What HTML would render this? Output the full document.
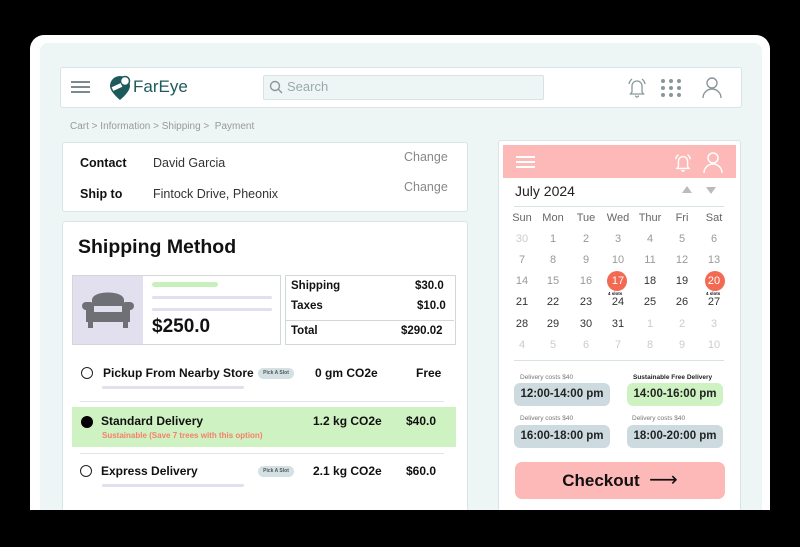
<!DOCTYPE html>
<html><head><meta charset="utf-8"><style>
*{margin:0;padding:0;box-sizing:border-box}
body{width:800px;height:547px;background:#000;position:relative;overflow:hidden;font-family:"Liberation Sans","DejaVu Sans",sans-serif;color:#111}
.a{position:absolute}
.box{position:absolute;background:#fff;border:1.5px solid #d8e4e6;border-radius:3px}
.g{color:#888}
.b{font-weight:bold}
.cal{position:absolute;width:30px;text-align:center;font-size:11px;color:#999}
.dk{color:#333}
.lt{color:#ccc}
.slot{position:absolute;width:96px;height:23px;border-radius:6px;background:#cddbe0;font-size:11.5px;font-weight:bold;text-align:center;line-height:23px;color:#222}
.sl{position:absolute;font-size:6.5px;color:#777}
.pill{position:absolute;background:#d3e0e4;border-radius:6px;font-size:5px;font-weight:bold;color:#555;width:36px;height:11px;line-height:11px;text-align:center}
.bar{position:absolute;height:4px;border-radius:2px;background:#e2e0ee}
.rad{position:absolute;width:12px;height:12px;border:1.5px solid #222;border-radius:50%}
</style></head><body>
<div class="a" style="left:30px;top:35px;width:740px;height:490px;background:#fff;border-radius:14px"></div>
<div class="a" style="left:40px;top:43px;width:722px;height:480px;background:#eef5f5;border-radius:8px"></div>

<!-- header -->
<div class="box" style="left:60px;top:67px;width:682px;height:41px"></div>
<div class="a" style="left:71px;top:81px;width:19px;height:2px;background:#7d8a8c;box-shadow:0 5px 0 #7d8a8c,0 10px 0 #7d8a8c"></div>
<svg class="a" style="left:106px;top:74px" width="28" height="28" viewBox="0 0 28 28"><path d="M14 2a10 10 0 0 0-10 10c0 6 10 14 10 14s10-8 10-14A10 10 0 0 0 14 2z" fill="#1d5a5c"/><circle cx="19" cy="7" r="4.5" fill="#fff" stroke="#1d5a5c" stroke-width="1.5"/><rect x="6" y="11" width="10" height="4" fill="#fff" transform="rotate(-25 11 13)"/></svg>
<div class="a" style="left:133px;top:77px;font-size:17px;color:#1d5a5c">FarEye</div>
<div class="a" style="left:263px;top:75px;width:281px;height:25px;background:#eef5f5;border:1.5px solid #d6e2e4;border-radius:2px"></div>
<svg class="a" style="left:269px;top:80px" width="14" height="14"><circle cx="6" cy="6" r="4.5" fill="none" stroke="#8a9799" stroke-width="1.4"/><path d="M9.3 9.3L13 13" stroke="#8a9799" stroke-width="1.4"/></svg>
<div class="a" style="left:287px;top:79px;font-size:13px;color:#9aa">Search</div>
<svg class="a" style="left:625px;top:75px" width="24" height="24" viewBox="0 0 24 24" fill="none" stroke="#8a9799" stroke-width="1.3"><path d="M7 17V11a5 5 0 0 1 10 0v6l1.5 2h-13z"/><path d="M10.5 20.5a1.5 1.5 0 0 0 3 0"/><path d="M4 9a8 8 0 0 1 3-5M20 9a8 8 0 0 0-3-5"/></svg>
<svg class="a" style="left:659px;top:77px" width="25" height="22" fill="#8a9799"><circle cx="4" cy="4" r="2"/><circle cx="12" cy="4" r="2"/><circle cx="20" cy="4" r="2"/><circle cx="4" cy="11" r="2"/><circle cx="12" cy="11" r="2"/><circle cx="20" cy="11" r="2"/><circle cx="4" cy="18" r="2"/><circle cx="12" cy="18" r="2"/><circle cx="20" cy="18" r="2"/></svg>
<svg class="a" style="left:700px;top:75px" width="24" height="24" fill="none" stroke="#8a9799" stroke-width="1.4"><circle cx="12" cy="8" r="5"/><path d="M3 23a9 9 0 0 1 18 0"/></svg>

<div class="a g" style="left:70px;top:121px;font-size:10px;color:#999">Cart &gt; Information &gt; Shipping &gt;&nbsp; Payment</div>

<!-- contact -->
<div class="box" style="left:62px;top:142px;width:406px;height:70px"></div>
<div class="a b" style="left:80px;top:156px;font-size:12.5px">Contact</div>
<div class="a" style="left:153px;top:156px;font-size:12.5px;color:#333">David Garcia</div>
<div class="a" style="left:404px;top:150px;font-size:12.5px;color:#888">Change</div>
<div class="a b" style="left:80px;top:187px;font-size:12.5px">Ship to</div>
<div class="a" style="left:153px;top:187px;font-size:12.5px;color:#333">Fintock Drive, Pheonix</div>
<div class="a" style="left:404px;top:180px;font-size:12.5px;color:#888">Change</div>

<!-- shipping -->
<div class="box" style="left:62px;top:221px;width:406px;height:300px"></div>
<div class="a b" style="left:78px;top:236px;font-size:19.5px">Shipping Method</div>
<div class="a" style="left:72px;top:275px;width:209px;height:70px;border:1.5px solid #d0d8da;background:#fff"></div>
<div class="a" style="left:73px;top:276px;width:70px;height:68px;background:#e2e0ee"></div>
<svg class="a" style="left:80px;top:286px" width="56" height="46" viewBox="0 0 56 46" fill="#6f6f76"><path d="M12 14c0-10 32-10 32 0v6H12z"/><rect x="2" y="16" width="12" height="8" rx="4"/><rect x="42" y="16" width="12" height="8" rx="4"/><rect x="6" y="18" width="8" height="18"/><rect x="42" y="18" width="8" height="18"/><rect x="10" y="26" width="36" height="10"/><rect x="8" y="36" width="5" height="6"/><rect x="43" y="36" width="5" height="6"/></svg>
<div class="a" style="left:152px;top:282px;width:66px;height:5px;border-radius:3px;background:#c8f0bc"></div>
<div class="bar" style="left:152px;top:296px;width:120px;height:3px"></div>
<div class="bar" style="left:152px;top:308px;width:120px;height:3px"></div>
<div class="a b" style="left:152px;top:316px;font-size:19px">$250.0</div>
<div class="a" style="left:285px;top:275px;width:171px;height:70px;border:1.5px solid #d0d8da;background:#fff"></div>
<div class="a" style="left:286px;top:320px;width:168px;height:1px;background:#d0d8da"></div>
<div class="a b" style="left:291px;top:280px;font-size:11.5px">Shipping</div>
<div class="a b" style="left:415px;top:280px;font-size:11.5px">$30.0</div>
<div class="a b" style="left:291px;top:300px;font-size:11.5px">Taxes</div>
<div class="a b" style="left:417px;top:300px;font-size:11.5px">$10.0</div>
<div class="a b" style="left:291px;top:325px;font-size:11.5px">Total</div>
<div class="a b" style="left:401px;top:325px;font-size:11.5px">$290.02</div>

<div class="rad" style="left:81px;top:367px"></div>
<div class="a b" style="left:103px;top:366px;font-size:12px">Pickup From Nearby Store</div>
<div class="pill" style="left:258px;top:368px">Pick A Slot</div>
<div class="a b" style="left:315px;top:366px;font-size:12px">0 gm CO2e</div>
<div class="a b" style="left:416px;top:366px;font-size:12px">Free</div>
<div class="bar" style="left:102px;top:386px;width:142px;height:3px"></div>
<div class="a" style="left:80px;top:401px;width:364px;height:1px;background:#e0e6e8"></div>
<div class="a" style="left:72px;top:407px;width:384px;height:40px;background:#cff2c2"></div>
<div class="a" style="left:81px;top:416px;width:12px;height:12px;border-radius:50%;background:#000"></div>
<div class="a b" style="left:101px;top:414px;font-size:12px">Standard Delivery</div>
<div class="a b" style="left:102px;top:431px;font-size:8px;color:#f5806a">Sustainable (Save 7 trees with this option)</div>
<div class="a b" style="left:313px;top:414px;font-size:12px">1.2 kg CO2e</div>
<div class="a b" style="left:406px;top:414px;font-size:12px">$40.0</div>
<div class="a" style="left:80px;top:453px;width:364px;height:1px;background:#e0e6e8"></div>
<div class="rad" style="left:80px;top:465px"></div>
<div class="a b" style="left:101px;top:464px;font-size:12px">Express Delivery</div>
<div class="pill" style="left:258px;top:466px">Pick A Slot</div>
<div class="a b" style="left:313px;top:464px;font-size:12px">2.1 kg CO2e</div>
<div class="a b" style="left:406px;top:464px;font-size:12px">$60.0</div>
<div class="bar" style="left:102px;top:484px;width:142px;height:3px"></div>

<!-- right panel -->
<div class="box" style="left:498px;top:140px;width:243px;height:380px"></div>
<div class="a" style="left:503px;top:145px;width:233px;height:33px;background:#fdb9b7"></div>
<div class="a" style="left:516px;top:156px;width:19px;height:2px;background:#fff;box-shadow:0 5px 0 #fff,0 10px 0 #fff"></div>
<svg class="a" style="left:672px;top:150px" width="22" height="24" viewBox="0 0 24 24" fill="none" stroke="#fff" stroke-width="1.5"><path d="M7 17V11a5 5 0 0 1 10 0v6l1.5 2h-13z"/><path d="M10.5 20.5a1.5 1.5 0 0 0 3 0"/><path d="M4 9a8 8 0 0 1 3-5M20 9a8 8 0 0 0-3-5"/></svg>
<svg class="a" style="left:702px;top:150px" width="22" height="24" fill="none" stroke="#fff" stroke-width="1.5"><circle cx="11" cy="8" r="5"/><path d="M2 23a9 9 0 0 1 18 0"/></svg>
<div class="a" style="left:515px;top:183px;font-size:14px;color:#222">July 2024</div>
<div class="a" style="left:682px;top:186px;width:0;height:0;border-left:5px solid transparent;border-right:5px solid transparent;border-bottom:7px solid #bbb"></div>
<div class="a" style="left:706px;top:187px;width:0;height:0;border-left:5px solid transparent;border-right:5px solid transparent;border-top:7px solid #bbb"></div>
<div class="a" style="left:514px;top:206px;width:210px;height:1px;background:#d6e2e6"></div>
<div class="a" style="left:514px;top:360px;width:210px;height:1px;background:#d6e2e6"></div>
<div class="a" style="left:607px;top:271px;width:20px;height:20px;border-radius:50%;background:#f26a52"></div>
<div class="a" style="left:705px;top:271px;width:20px;height:20px;border-radius:50%;background:#f26a52"></div>
<div class="a b" style="left:608px;top:291px;font-size:4.5px">4 slots</div>
<div class="a b" style="left:706px;top:291px;font-size:4.5px">4 slots</div>
<div id="cal"></div>
<script>
var cols=[522,553,586,618,650,682,714],rows=[218,239,260,281,302,324,345];
var hd=["Sun","Mon","Tue","Wed","Thur","Fri","Sat"];
var d=[[30,1,2,3,4,5,6],[7,8,9,10,11,12,13],[14,15,16,17,18,19,20],[21,22,23,24,25,26,27],[28,29,30,31,1,2,3],[4,5,6,7,8,9,10]];
var h="";
for(var i=0;i<7;i++)h+='<div class="cal" style="left:'+(cols[i]-15)+'px;top:'+(rows[0]-6)+'px;color:#666">'+hd[i]+'</div>';
for(var r=0;r<6;r++)for(var c=0;c<7;c++){var v=d[r][c],cl="";
if(r==0&&c==0||r>=4&&(r==5||c>=4))cl="lt";else if(r>=3||(r==2&&c>=4))cl="dk";
var st="";if(r==2&&(c==3||c==6)){st="color:#fff";}
h+='<div class="cal '+cl+'" style="left:'+(cols[c]-15)+'px;top:'+(rows[r+1]-6)+'px;'+st+'">'+v+'</div>';}
document.getElementById("cal").innerHTML=h;
</script>
<div class="sl" style="left:520px;top:374px">Delivery costs $40</div>
<div class="sl b" style="left:633px;top:374px;color:#222">Sustainable Free Delivery</div>
<div class="slot" style="left:514px;top:383px">12:00-14:00 pm</div>
<div class="slot" style="left:627px;top:383px;background:#cff2c2">14:00-16:00 pm</div>
<div class="sl" style="left:520px;top:415px">Delivery costs $40</div>
<div class="sl" style="left:632px;top:415px">Delivery costs $40</div>
<div class="slot" style="left:514px;top:425px">16:00-18:00 pm</div>
<div class="slot" style="left:627px;top:425px">18:00-20:00 pm</div>
<div class="a" style="left:515px;top:462px;width:210px;height:37px;border-radius:7px;background:#fdb9b7;text-align:center;line-height:37px;font-size:17px;font-weight:bold;color:#111">Checkout&nbsp;&nbsp;<span style="font-weight:normal;font-size:20px">⟶</span></div>

<div class="a" style="left:0;top:510px;width:800px;height:37px;background:#000;z-index:10"></div>
</body></html>
